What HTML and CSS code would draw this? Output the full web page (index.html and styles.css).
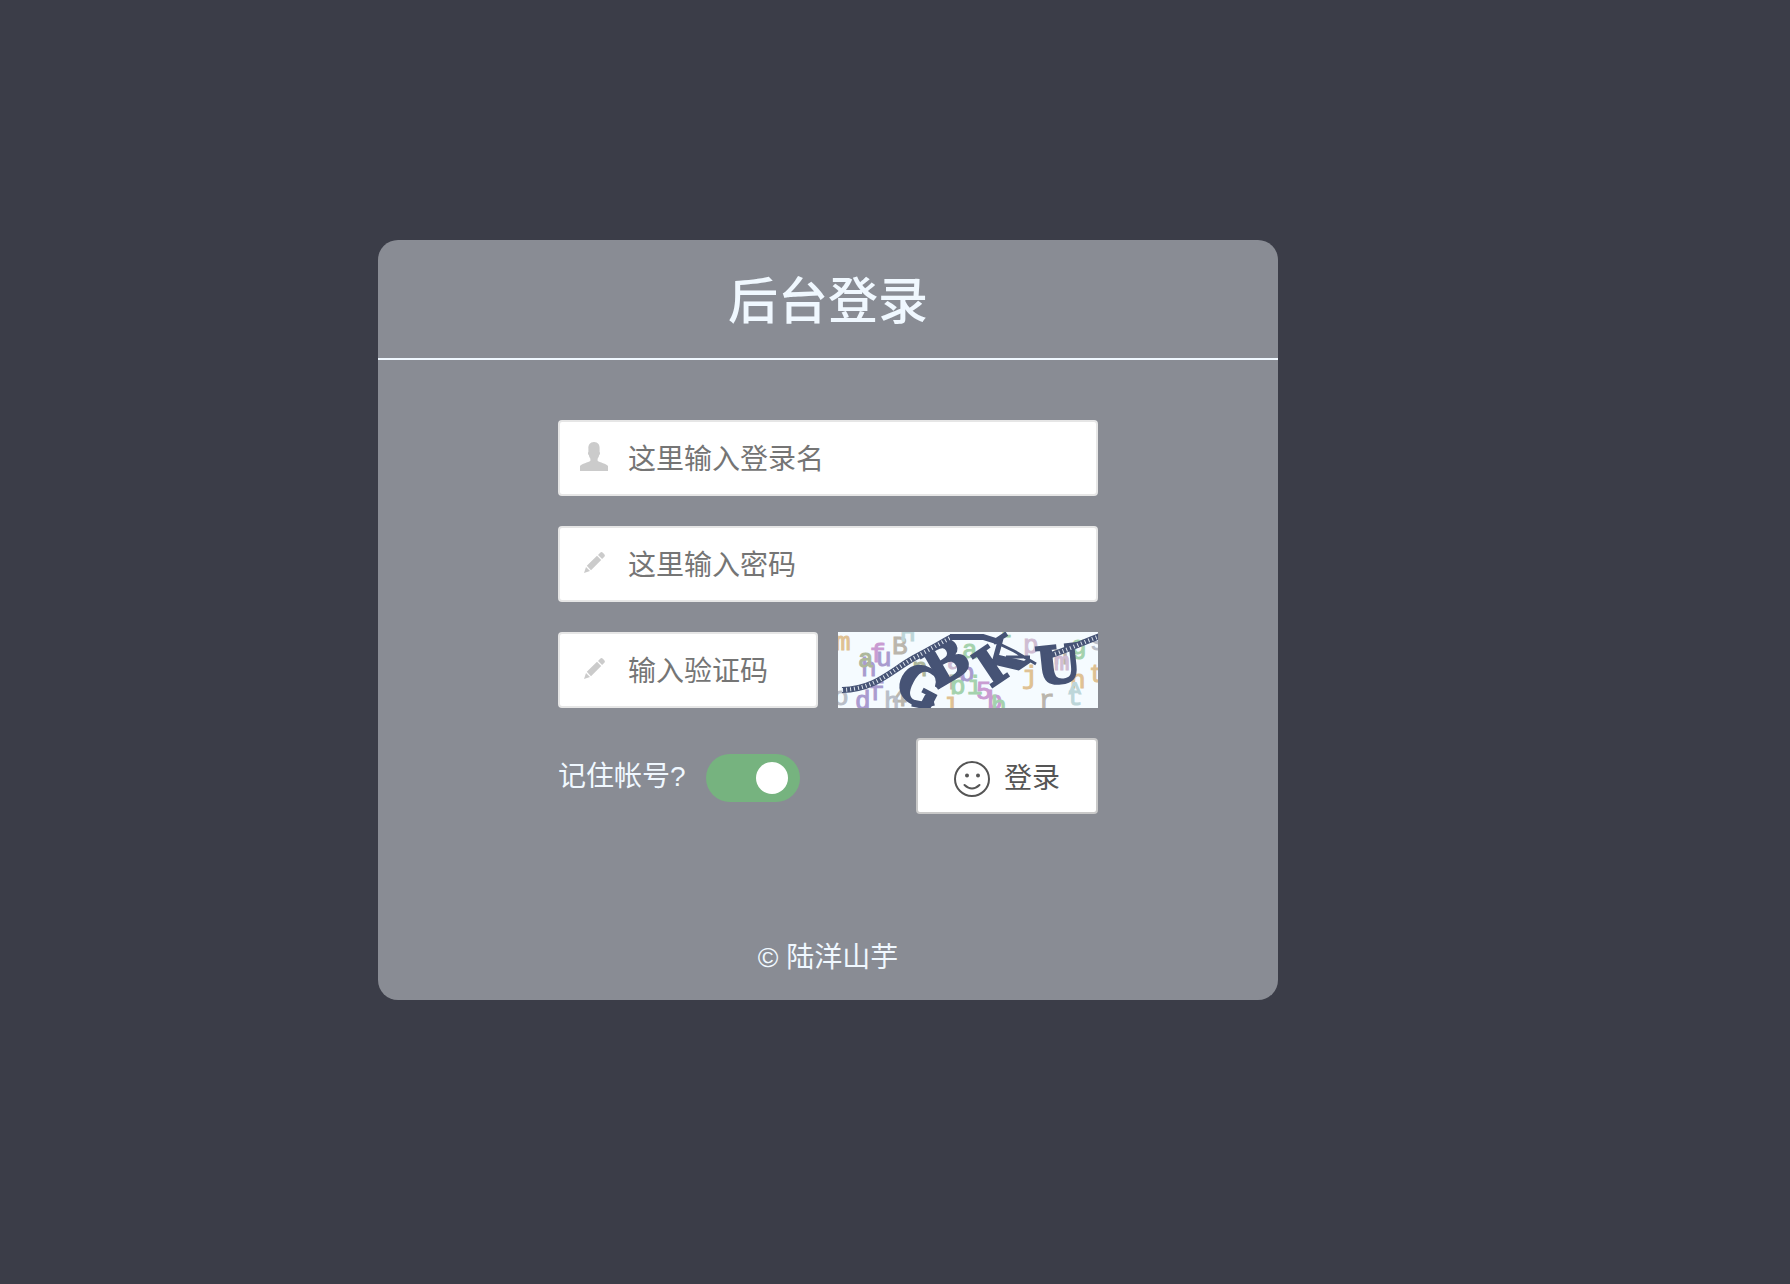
FILE: index.html
```html
<!DOCTYPE html>
<html lang="zh-CN">
<head>
<meta charset="utf-8">
<meta name="viewport" content="width=device-width, initial-scale=1">
<title>后台登录</title>
<link rel="stylesheet" href="styles.css">
</head>
<body>
<main class="card">
  <header class="card-head"><h1 class="title">后台登录</h1></header>
  <form class="form">
    <div class="field">
      <label class="field-icon" for="username" aria-label="登录名">
        <svg class="icon-user" viewBox="0 0 28 29" aria-hidden="true"><path d="M14 0c4 0 6 3 5.600 7v3c.7.200.6 2.500-.5 3.200-.3 1.700-.9 2.600-1.500 3.500v2c2 2 9 2.700 10.400 5.300V29H0v-5c1.400-2.600 8.400-3.300 10.400-5.300v-2c-.6-.9-1.200-1.800-1.500-3.500-1.100-.7-1.200-3-.5-3.200V7C8 3 10 0 14 0z"/></svg>
      </label>
      <input class="input" id="username" type="text" placeholder="这里输入登录名">
    </div>
    <div class="field">
      <label class="field-icon" for="password" aria-label="密码">
        <svg class="icon-pen" viewBox="0 0 21 21" aria-hidden="true"><path d="M0 21l2-6 4 4zM2.800 13.800L13 3.800l4.200 4.200L7 18.200zM14 2.900L16.200.7q1.300-1.200 2.600 0l1.500 1.500q1.200 1.300 0 2.600L18.100 7z"/></svg>
      </label>
      <input class="input" id="password" type="password" placeholder="这里输入密码">
    </div>
    <div class="row">
      <div class="field">
        <label class="field-icon" for="captcha" aria-label="验证码">
          <svg class="icon-pen" viewBox="0 0 21 21" aria-hidden="true"><path d="M0 21l2-6 4 4zM2.800 13.800L13 3.800l4.200 4.200L7 18.200zM14 2.900L16.200.7q1.300-1.200 2.600 0l1.500 1.500q1.200 1.300 0 2.600L18.100 7z"/></svg>
        </label>
        <input class="input" id="captcha" type="text" placeholder="输入验证码">
      </div>
      <svg class="captcha" viewBox="0 0 260 76" role="img" aria-label="验证码图片">
        <g class="noise">
          <g color="#dfc193"><text x="-3" y="18">m</text><text x="184" y="52">j</text><text x="232" y="56">n</text><text x="251" y="50">t</text><text x="106" y="84">l</text></g>
          <g color="#c99bd2"><text x="32" y="30">f</text><text x="138" y="67">5</text><text x="149" y="77">b</text></g>
          <g color="#a99bcf"><text x="38" y="34">u</text><text x="23" y="44">h</text><text x="17" y="77">d</text><text x="31" y="68">f</text><text x="121" y="49">b</text></g>
          <g color="#bab5ac"><text x="54" y="22">B</text><text x="54" y="74">4</text><text x="109" y="57">r</text><text x="201" y="76">r</text><text x="215" y="32">n</text></g>
          <g color="#b9bec8"><text x="-5" y="73">o</text><text x="46" y="78">h</text><text x="252" y="18">s</text></g>
          <g color="#adb79b"><text x="20" y="35">a</text><text x="74" y="44">n</text></g>
          <g color="#a4d2ad"><text x="124" y="26">a</text><text x="112" y="62">b</text><text x="129" y="62">i</text><text x="153" y="82">h</text><text x="233" y="22">g</text><text x="158" y="5">l</text></g>
          <g color="#d0bdd3"><text x="185" y="21">p</text><text x="216" y="38">m</text><text x="109" y="37">a</text></g>
          <g color="#bdd6d9"><text x="62" y="9">H</text><text x="229" y="73">t</text><text x="229" y="68">^</text></g>
        </g>
        <g class="code">
          <text transform="translate(83 53) rotate(28)" x="-22" y="20">G</text>
          <text transform="translate(106 31) rotate(-30)" x="-20" y="19">B</text>
          <text transform="translate(161 28) rotate(-34)" x="-23" y="19">K</text>
          <text transform="translate(221 33) rotate(-6)" x="-23" y="18">U</text>
        </g>
        <path class="blob" d="M74 71L84 73 96 70M83 73L88 78"/>
        <path class="rope" d="M4 58C38 57 54 38 76 26S101 12 114 5"/>
        <path class="rope-twist" d="M4 58C38 57 54 38 76 26S101 12 114 5"/>
        <path class="rope" d="M112 5H145L158 9"/>
        <path class="strand" d="M149 6L176 19 198 32M168 25H192"/>
        <path class="rope" d="M207 25C228 19 243 11 262 4"/>
        <path class="rope-twist" d="M217 22C234 16 246 10 262 4"/>
      </svg>
    </div>
    <div class="row row-actions">
      <label class="remember"><span>记住帐号?</span><input class="switch" type="checkbox" role="switch" checked></label>
      <button class="submit" type="button">
        <svg class="icon-smile" viewBox="0 0 36 36" aria-hidden="true"><circle cx="18" cy="18" r="17"/><path d="M10.500 24q7.500 7 15 0"/><circle class="eye" cx="13" cy="14.500" r="2"/><circle class="eye" cx="24" cy="14.500" r="2"/></svg>
        <span>登录</span>
      </button>
    </div>
  </form>
  <footer class="foot">© 陆洋山芋</footer>
</main>
</body>
</html>
```
FILE: styles.css
```css
* { box-sizing: border-box; }

body {
  margin: 0;
  min-height: 100vh;
  padding: 240px 0 40px;
  display: grid;
  grid-template-columns: 378fr minmax(auto, 900px) 512fr;
  align-items: start;
  background: #3b3d48;
  color: #f0f8ff;
  font: 28px/40px "Liberation Sans", "Noto Sans CJK SC", sans-serif;
}

.card {
  grid-column: 2;
  border-radius: 20px;
  background: #898c94;
}

.card-head {
  padding: 26px 0 20px;
  border-bottom: 2px solid #f0f8ff;
  text-align: center;
}

.title {
  margin: 0;
  font-size: 50px;
  line-height: 72px;
  font-weight: 500;
}

.form {
  width: 60%;
  margin: 0 auto;
  padding: 60px 0 124px;
  display: grid;
  gap: 30px;
}

.row {
  display: grid;
  grid-template-columns: 1fr 1fr;
  gap: 20px;
}

.field {
  display: grid;
  grid-template-columns: 72px 1fr;
  align-items: center;
}

.field-icon {
  grid-area: 1 / 1;
  z-index: 1;
  display: grid;
  place-items: center;
  padding-bottom: 4px;
  fill: #cbcbcb;
}

.icon-user { width: 28px; height: 29px; }
.icon-pen { width: 21px; height: 21px; }

.input {
  grid-area: 1 / 1 / 2 / 3;
  width: 100%;
  min-width: 0;
  height: 76px;
  padding: 3px 20px 0 68px;
  border: 2px solid #e6e6e6;
  border-radius: 4px;
  background: #fff;
  color: #333;
  font: inherit;
}

.input::placeholder { color: #757575; opacity: 1; }

.captcha {
  width: 100%;
  height: 76px;
  background: #f5fbff;
  overflow: hidden;
}

.noise { font: 26px "Liberation Mono", monospace; }
.noise text { fill: currentColor; stroke: currentColor; stroke-width: 1px; }
.code { font: bold 52px "DejaVu Serif", serif; fill: #465375; stroke: #465375; stroke-width: 2px; }
.blob { fill: none; stroke: #465375; stroke-width: 7px; }
.rope { fill: none; stroke: #465375; stroke-width: 6px; }
.rope-twist { fill: none; stroke: #dfe6ee; stroke-width: 4px; stroke-dasharray: 1 3; }
.strand { fill: none; stroke: #465375; stroke-width: 3px; }

.row-actions {
  display: flex;
  justify-content: space-between;
}

.remember {
  display: flex;
  align-items: center;
  gap: 20px;
  padding-top: 2px;
}

.switch {
  appearance: none;
  display: flex;
  align-items: center;
  justify-content: flex-end;
  width: 94px;
  height: 48px;
  margin: 2px 0 0;
  padding: 0 12px;
  border-radius: 24px;
  background: #76b37f;
}

.switch::before {
  content: "";
  width: 32px;
  height: 32px;
  border-radius: 50%;
  background: #fff;
}

.switch:not(:checked) { justify-content: flex-start; background: #aaa; }

.submit {
  display: flex;
  align-items: center;
  gap: 14px;
  height: 76px;
  padding: 6px 36px 0;
  border: 2px solid #c9c9c9;
  border-radius: 4px;
  background: #fff;
  color: #555;
  font: inherit;
}

.icon-smile {
  width: 36px;
  height: 36px;
  fill: none;
  stroke: #555;
  stroke-width: 2px;
  stroke-linecap: round;
}

.eye { fill: #555; stroke: none; }

.foot {
  padding-bottom: 22px;
  text-align: center;
}
```
